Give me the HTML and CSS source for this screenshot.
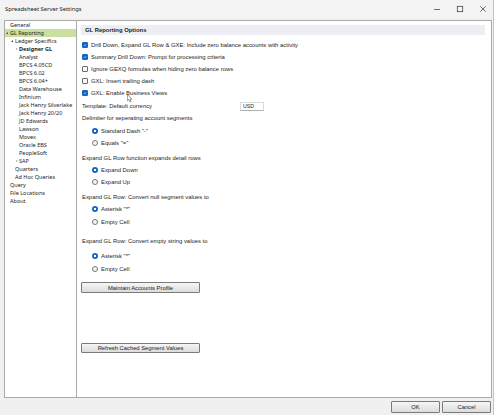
FILE: index.html
```html
<!DOCTYPE html>
<html>
  <head>
    <title>Spreadsheet Server Settings</title>
    <link rel="stylesheet" href="styles.css">
  </head>
  <body>
    <div class="window">
      <div class="titlebar">
        <span class="title">Spreadsheet Server Settings</span>
        <div class="controls">
          <svg class="ctl" viewBox="0 0 10 10"><path d="M2 5.5 H8" stroke="#333" stroke-width="0.7"/></svg>
          <svg class="ctl" viewBox="0 0 10 10"><rect x="2.3" y="2.3" width="5.4" height="5.4" fill="none" stroke="#333" stroke-width="0.7"/></svg>
          <svg class="ctl" viewBox="0 0 10 10"><path d="M2.3 2.3 L7.7 7.7 M7.7 2.3 L2.3 7.7" stroke="#333" stroke-width="0.7"/></svg>
        </div>
      </div>

      <div class="panes">
        <ul class="tree">
          <li class="lvl0">General</li>
          <li class="lvl0 open selected">GL Reporting</li>
          <li class="lvl1 open">Ledger Specifics</li>
          <li class="lvl2 closed bold">Designer GL</li>
          <li class="lvl2">Analyst</li>
          <li class="lvl2">BPCS 4.05CD</li>
          <li class="lvl2">BPCS 6.02</li>
          <li class="lvl2">BPCS 6.04+</li>
          <li class="lvl2">Data Warehouse</li>
          <li class="lvl2">Infinium</li>
          <li class="lvl2">Jack Henry Silverlake</li>
          <li class="lvl2">Jack Henry 20/20</li>
          <li class="lvl2">JD Edwards</li>
          <li class="lvl2">Lawson</li>
          <li class="lvl2">Movex</li>
          <li class="lvl2">Oracle EBS</li>
          <li class="lvl2">PeopleSoft</li>
          <li class="lvl2 closed">SAP</li>
          <li class="lvl1">Quarters</li>
          <li class="lvl1">Ad Hoc Queries</li>
          <li class="lvl0">Query</li>
          <li class="lvl0">File Locations</li>
          <li class="lvl0">About</li>
        </ul>

        <div class="options">
          <div class="section-head">GL Reporting Options</div>

          <div class="checks">
            <div class="row"><span class="cb on"><svg viewBox="0 0 6 6"><path d="M1.3 3.1 L2.5 4.3 L4.8 1.7" fill="none" stroke="#fff" stroke-width="0.8"/></svg></span>Drill Down, Expand GL Row &amp; GXE: Include zero balance accounts with activity</div>
            <div class="row"><span class="cb on"><svg viewBox="0 0 6 6"><path d="M1.3 3.1 L2.5 4.3 L4.8 1.7" fill="none" stroke="#fff" stroke-width="0.8"/></svg></span>Summary Drill Down: Prompt for processing criteria</div>
            <div class="row"><span class="cb"></span>Ignore GEXQ formulas when hiding zero balance rows</div>
            <div class="row"><span class="cb"></span>GXL: Insert trailing dash</div>
            <div class="row"><span class="cb on"><svg viewBox="0 0 6 6"><path d="M1.3 3.1 L2.5 4.3 L4.8 1.7" fill="none" stroke="#fff" stroke-width="0.8"/></svg></span>GXL: Enable Business Views</div>
          </div>

          <div class="row template">
            <span class="template-label">Template: Default currency</span>
            <span class="currency">USD</span>
          </div>

          <div class="row">Delimiter for seperating account segments</div>
          <div class="row radio-row gap1"><span class="rb on"></span>Standard Dash "-"</div>
          <div class="row radio-row"><span class="rb"></span>Equals "="</div>

          <div class="row gap3">Expand GL Row function expands detail rows</div>
          <div class="row radio-row"><span class="rb on"></span>Expand Down</div>
          <div class="row radio-row"><span class="rb"></span>Expand Up</div>

          <div class="row gap3">Expand GL Row: Convert null segment values to</div>
          <div class="row radio-row"><span class="rb on"></span>Asterisk "*"</div>
          <div class="row radio-row gap1"><span class="rb"></span>Empty Cell</div>

          <div class="row gap7">Expand GL Row: Convert empty string values to</div>
          <div class="row radio-row gap3"><span class="rb on"></span>Asterisk "*"</div>
          <div class="row radio-row gap1"><span class="rb"></span>Empty Cell</div>

          <button class="wide-btn first">Maintain Accounts Profile</button>
          <button class="wide-btn second">Refresh Cached Segment Values</button>
        </div>
      </div>

      <div class="footer">
        <button class="dlg-btn">OK</button>
        <button class="dlg-btn">Cancel</button>
      </div>

      <!-- mouse pointer left over the options -->
      <svg class="pointer" viewBox="0 0 8 12"><path d="M0.5 0.5 L0.5 9 L2.6 7.2 L4 10.6 L5.3 10 L3.9 6.8 L6.6 6.8 Z" fill="#fff" stroke="#222" stroke-width="0.6"/></svg>
    </div>
  </body>
</html>
```

FILE: styles.css
```css
body {
  margin: 0;
  background-color: #fff;
  font-family: "Liberation Sans", Arial, sans-serif;
  color: #1e1e1e;
}

.window {
  position: relative;
  width: 494px;
  height: 415px;
  box-sizing: border-box;
  background-color: #f0f0f0;
  border-right: 1px solid #c4c4c4;
  overflow: hidden;
}

.titlebar {
  height: 18px;
  display: flex;
  align-items: center;
  justify-content: space-between;
  background-color: #f3f3f3;
}

.title {
  padding-left: 5px;
  font-family: "Noto Sans", sans-serif;
  font-size: 5.8px;
  color: #222;
}

.controls {
  display: flex;
  align-items: center;
  gap: 13px;
  padding-right: 5px;
}

.ctl {
  width: 10px;
  height: 10px;
  display: block;
}

.panes {
  display: flex;
  margin: 2px 0 0 4px;
  width: 488px;
  height: 378px;
  box-sizing: border-box;
  border: 1px solid #a9a9a9;
  background-color: #fff;
}

/* navigation tree */
.tree {
  list-style: none;
  margin: 0;
  padding: 0;
  width: 71px;
  flex-shrink: 0;
  border-right: 1px solid #a9a9a9;
  font-family: "Noto Sans", sans-serif;
  font-size: 5.5px;
  color: #1e1e1e;
}

.tree li {
  position: relative;
  height: 8px;
  line-height: 8px;
  white-space: nowrap;
}

.tree .lvl0 { padding-left: 5px; }
.tree .lvl1 { padding-left: 10px; }
.tree .lvl2 { padding-left: 14px; }

.tree .selected {
  background-color: #c9e0a0;
}

.tree .bold {
  font-weight: bold;
}

.tree .open::before {
  content: "";
  position: absolute;
  top: 2.5px;
  width: 0;
  height: 0;
  border-top: 2.5px solid transparent;
  border-right: 2.5px solid #444;
}

.tree .lvl0.open::before { left: 1px; }
.tree .lvl1.open::before { left: 6px; }

.tree .closed::before {
  content: "";
  position: absolute;
  top: 2.5px;
  left: 10.5px;
  width: 0;
  height: 0;
  border-top: 1.5px solid transparent;
  border-bottom: 1.5px solid transparent;
  border-left: 2.2px solid #aaa;
}

/* options pane */
.options {
  flex: 1;
  font-size: 5.9px;
}

.section-head {
  margin: 4px 6px 0 4px;
  height: 10px;
  line-height: 10px;
  padding-left: 4px;
  background-color: #eceef3;
  font-weight: bold;
}

.checks {
  margin-top: 4px;
}

.row {
  display: flex;
  align-items: center;
  height: 12px;
  padding-left: 5px;
  white-space: nowrap;
}

.radio-row {
  padding-left: 15px;
}

.gap1 { margin-top: 1px; }
.gap3 { margin-top: 3px; }
.gap7 { margin-top: 7px; }

.template {
  margin-top: 1px;
}

.template-label {
  width: 158px;
}

.currency {
  width: 20px;
  height: 7px;
  line-height: 7px;
  padding-left: 2px;
  border: 1px solid #dadada;
  border-bottom-color: #b0b0b0;
  font-size: 5.3px;
}

.cb {
  width: 6px;
  height: 6px;
  box-sizing: border-box;
  margin-right: 3px;
  border: 0.8px solid #6b6b6b;
  border-radius: 1px;
  background-color: #fafafa;
}

.cb.on {
  border-color: #1366c8;
  background-color: #1366c8;
}

.cb svg {
  display: block;
  width: 100%;
  height: 100%;
}

.rb {
  width: 6px;
  height: 6px;
  box-sizing: border-box;
  margin-right: 3px;
  border: 0.8px solid #777;
  border-radius: 50%;
  background-color: #f6f6f6;
}

.rb.on {
  border: none;
  background: radial-gradient(circle, #fff 1.1px, #1366c8 1.5px);
}

.wide-btn,
.dlg-btn {
  display: block;
  padding: 0;
  font-family: "Liberation Sans", Arial, sans-serif;
  font-size: 5.8px;
  color: #222;
  background: linear-gradient(#f6f6f6, #dcdcdc);
  border: 1px solid #7a7a7a;
  border-radius: 1px;
}

.wide-btn {
  width: 119px;
  height: 11px;
  margin-left: 4px;
}

.wide-btn.first { margin-top: 7px; }
.wide-btn.second { margin-top: 50px; height: 10px; }

.footer {
  display: flex;
  justify-content: flex-end;
  gap: 2px;
  padding: 3px 2px 0 0;
}

.dlg-btn {
  width: 49px;
  height: 12px;
}

.pointer {
  position: absolute;
  left: 127px;
  top: 94px;
  width: 6px;
  height: 9px;
}
```
